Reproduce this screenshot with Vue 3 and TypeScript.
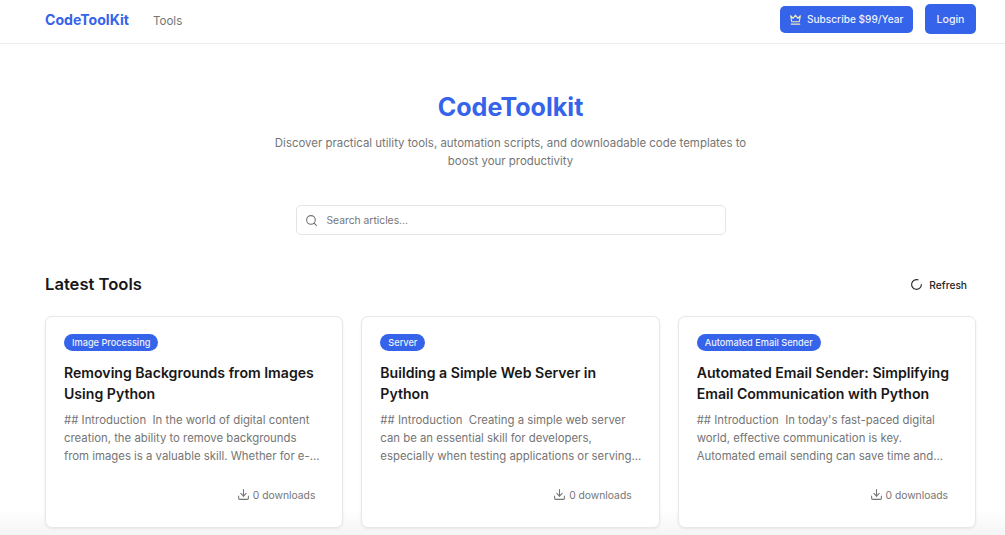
<script setup lang="ts">
interface Tool {
  tag: string;
  title: string;
  excerpt: string;
  downloads: number;
}

const tools: Tool[] = [
  {
    tag: "Image Processing",
    title: "Removing Backgrounds from Images Using Python",
    excerpt:
      "## Introduction\u00a0 In the world of digital content creation, the ability to remove backgrounds from\u00a0images is a valuable skill. Whether for e-...",
    downloads: 0,
  },
  {
    tag: "Server",
    title: "Building a Simple Web Server in Python",
    excerpt:
      "## Introduction\u00a0 Creating a simple web server can be an essential skill for developers, especially when testing applications or serving...",
    downloads: 0,
  },
  {
    tag: "Automated Email Sender",
    title: "Automated Email Sender: Simplifying Email Communication with Python",
    excerpt:
      "## Introduction\u00a0 In today's fast-paced digital world, effective communication is key. Automated email sending can save time and...",
    downloads: 0,
  },
];
</script>

<template>
  <div class="page">
    <header class="nav">
      <div class="nav-left">
        <a class="brand">CodeToolKit</a>
        <a class="nav-link">Tools</a>
      </div>
      <div class="nav-right">
        <button class="btn subscribe">
          <svg class="crown" width="13" height="13" viewBox="0 0 24 24" fill="none" stroke="currentColor" stroke-width="2" stroke-linecap="round" stroke-linejoin="round">
            <path d="M3 5l4.5 5L12 4l4.5 6L21 5l-2 11H5z" />
            <path d="M4 20.5h16" />
          </svg>
          Subscribe $99/Year
        </button>
        <button class="btn login">Login</button>
      </div>
    </header>

    <main class="main">
      <section class="hero">
        <h1>CodeToolkit</h1>
        <p>Discover practical utility tools, automation scripts, and downloadable code templates to boost your productivity</p>
        <div class="search">
          <svg width="13" height="13" viewBox="0 0 24 24" fill="none" stroke="#737373" stroke-width="2" stroke-linecap="round" stroke-linejoin="round">
            <circle cx="11" cy="11" r="8" />
            <path d="M21 21l-4.3-4.3" />
          </svg>
          <input type="text" placeholder="Search articles..." />
        </div>
      </section>

      <div class="section-head">
        <h2>Latest Tools</h2>
        <button class="refresh">
          <svg width="13" height="13" viewBox="0 0 24 24" fill="none" stroke="currentColor" stroke-width="2" stroke-linecap="round" stroke-linejoin="round">
            <path d="M21 12a9 9 0 1 1-6.2-8.6" />
          </svg>
          Refresh
        </button>
      </div>

      <div class="grid">
        <article v-for="tool in tools" :key="tool.title" class="card">
          <span class="tag">{{ tool.tag }}</span>
          <h3>{{ tool.title }}</h3>
          <p class="excerpt">{{ tool.excerpt }}</p>
          <div class="downloads">
            <svg width="13" height="13" viewBox="0 0 24 24" fill="none" stroke="currentColor" stroke-width="2" stroke-linecap="round" stroke-linejoin="round">
              <path d="M21 15v4a2 2 0 0 1-2 2H5a2 2 0 0 1-2-2v-4" />
              <path d="M7 10l5 5 5-5" />
              <path d="M12 15V3" />
            </svg>
            <span>{{ tool.downloads }} downloads</span>
          </div>
        </article>
      </div>
    </main>
  </div>
</template>

<style>
html,
body {
  margin: 0;
  background: #fff;
  overflow: hidden;
}
</style>

<style scoped>
.page {
  height: 535px;
  overflow: hidden;
  background: linear-gradient(to top, #f5f5f5, #fff 26px);
  font-family: Inter, "Liberation Sans", sans-serif;
  color: #171717;
}

.nav {
  box-sizing: border-box;
  height: 44px;
  padding: 4px 29px 9px 45px;
  display: flex;
  align-items: center;
  justify-content: space-between;
  background: #fff;
  border-bottom: 1px solid #ececec;
}

.nav-left {
  display: flex;
  align-items: baseline;
  gap: 24px;
}

.brand {
  font-size: 14.1px;
  font-weight: 700;
  color: #3563e9;
}

.nav-link {
  font-size: 11.6px;
  color: #757575;
}

.nav-right {
  display: flex;
  align-items: center;
  gap: 12px;
}

.btn {
  border: 0;
  border-radius: 5px;
  background: #3563e9;
  color: #eef1ff;
  font: 500 10.1px Inter, "Liberation Sans", sans-serif;
  display: flex;
  align-items: center;
}

.subscribe {
  box-sizing: border-box;
  width: 133px;
  height: 27px;
  padding: 0 9px;
  gap: 5px;
  white-space: nowrap;
}

.crown {
  color: #f3e9b8;
  flex: none;
}

.login {
  box-sizing: border-box;
  width: 51px;
  height: 30px;
  justify-content: center;
  font-size: 10.6px;
}

.main {
  padding: 0 29px 0 45px;
}

.hero {
  text-align: center;
  display: flex;
  flex-direction: column;
  align-items: center;
  padding-top: 44px;
}

.hero h1 {
  margin: 0;
  font-size: 25.1px;
  line-height: 38px;
  font-weight: 700;
  color: #3563e9;
}

.hero p {
  margin: 8px 0 0;
  width: 490px;
  font-size: 11.45px;
  line-height: 18px;
  color: #757575;
}

.search {
  box-sizing: border-box;
  margin-top: 35px;
  width: 430px;
  height: 30px;
  padding: 0 8px;
  display: flex;
  align-items: center;
  gap: 9px;
  background: #fff;
  border: 1px solid #e4e4e7;
  border-radius: 5px;
}

.search input {
  flex: 1;
  border: 0;
  outline: 0;
  padding: 0;
  background: transparent;
  font: 400 10.3px Inter, "Liberation Sans", sans-serif;
}

.search input::placeholder {
  color: #757575;
  opacity: 1;
}

.section-head {
  margin-top: 36px;
  display: flex;
  align-items: center;
  justify-content: space-between;
}

.section-head h2 {
  margin: 0;
  font-size: 16.6px;
  line-height: 27px;
  font-weight: 600;
}

.refresh {
  border: 0;
  background: none;
  padding: 0 9px;
  height: 27px;
  display: flex;
  align-items: center;
  gap: 6px;
  color: #262626;
  font: 500 10.2px Inter, "Liberation Sans", sans-serif;
}

.grid {
  margin-top: 18px;
  display: grid;
  grid-template-columns: repeat(3, 1fr);
  gap: 18px;
}

.card {
  box-sizing: border-box;
  height: 212px;
  padding: 17px 18px;
  background: #fff;
  border: 1px solid #e8e8ea;
  border-radius: 7px;
  box-shadow: 0 1px 3px rgba(0, 0, 0, 0.07);
  display: flex;
  flex-direction: column;
  align-items: flex-start;
}

.tag {
  padding: 0 8px;
  height: 17px;
  line-height: 17px;
  border-radius: 9px;
  background: #3563e9;
  color: #eef1ff;
  font-size: 9.2px;
  font-weight: 500;
}

.card h3 {
  margin: 11px 0 0;
  font-size: 14.1px;
  line-height: 21px;
  font-weight: 600;
}

.excerpt {
  margin: 7px -6px 0 0;
  font-size: 11.36px;
  line-height: 18px;
  color: #757575;
}

.downloads {
  margin-top: auto;
  align-self: flex-end;
  padding-right: 9px;
  padding-bottom: 9px;
  display: flex;
  align-items: center;
  gap: 3px;
  font-size: 10.3px;
  color: #757575;
}
</style>
